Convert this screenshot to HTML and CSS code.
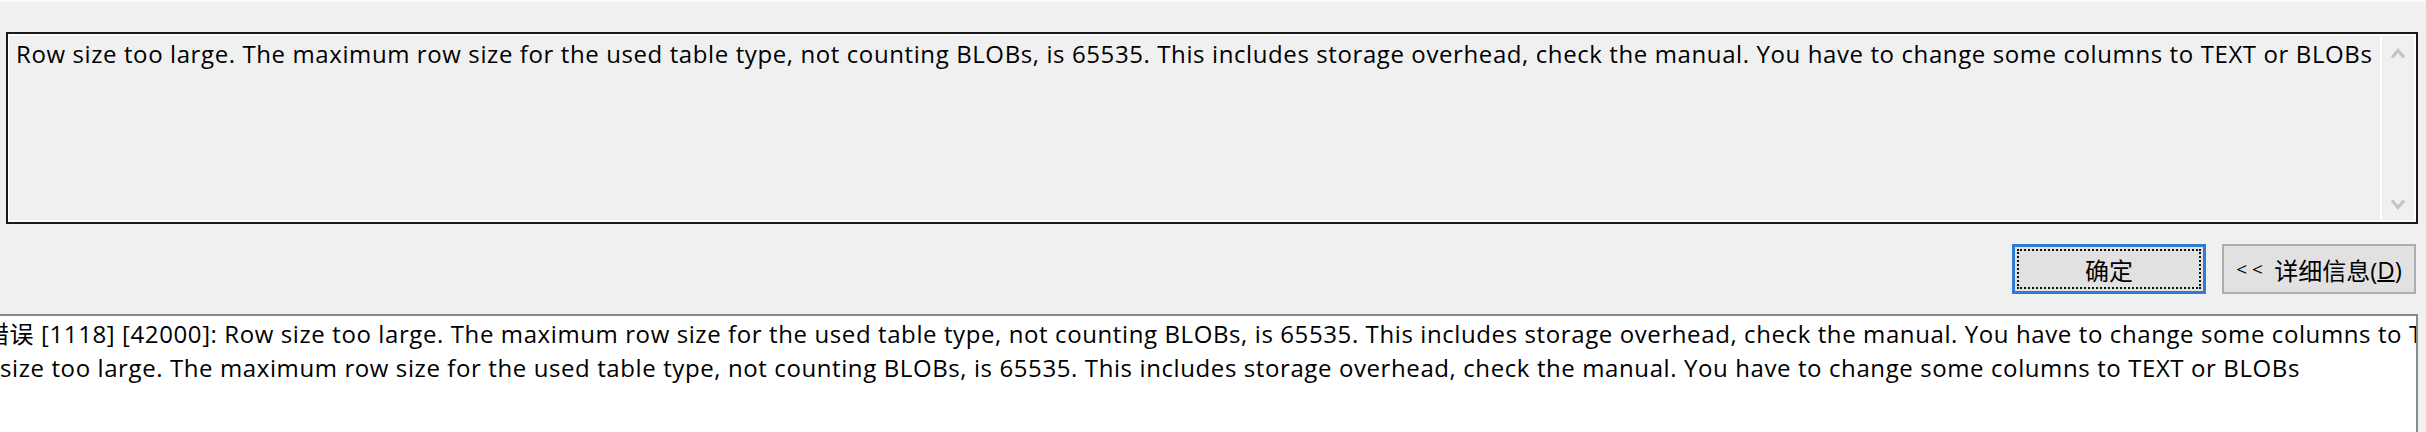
FILE: index.html
```html
<!DOCTYPE html>
<html lang="zh-CN">
<head>
<meta charset="utf-8">
<title>Error</title>
<link rel="stylesheet" href="styles.css">
</head>
<body>
<div class="top-strip"></div>
<div class="msg-box">
  <div class="msg-text">Row size too large. The maximum row size for the used table type, not counting BLOBs, is 65535. This includes storage overhead, check the manual. You have to change some columns to TEXT or BLOBs</div>
  <div class="vscroll">
    <svg class="arrow" width="16" height="12" viewBox="0 0 16 12"><polyline points="2,10.5 8,3.5 14,10.5" fill="none" stroke="#c4c4c4" stroke-width="3.2"/></svg>
    <svg class="arrow" width="16" height="12" viewBox="0 0 16 12"><polyline points="2,1.5 8,8.5 14,1.5" fill="none" stroke="#c4c4c4" stroke-width="3.2"/></svg>
  </div>
</div>
<div class="actions">
  <button class="btn btn-default"><span class="focus-ring">确定</span></button>
  <button class="btn"><span class="chev">&lt;&lt;</span> 详细信息(<u>D</u>)</button>
</div>
<div class="details">
  <div class="line first">错误 [1118] [42000]: Row size too large. The maximum row size for the used table type, not counting BLOBs, is 65535. This includes storage overhead, check the manual. You have to change some columns to TEXT or BLOBs</div>
  <div class="line">size too large. The maximum row size for the used table type, not counting BLOBs, is 65535. This includes storage overhead, check the manual. You have to change some columns to TEXT or BLOBs</div>
</div>
</body>
</html>
```
FILE: styles.css
```css
html, body {
  margin: 0;
  padding: 0;
  width: 2426px;
  height: 432px;
  overflow: hidden;
  background: #f0f0f0;
  font-family: "Open Sans", "Noto Sans CJK SC", sans-serif;
  font-size: 24px;
  color: #000;
}

.top-strip {
  height: 2px;
  background: #f9f9f9;
}

.msg-box {
  box-sizing: border-box;
  margin: 30px 0 0 6px;
  width: 2412px;
  height: 192px;
  border: 2px solid #191919;
  box-shadow: inset 1px 0 0 #fff, inset -2px 0 0 #fff, inset 0 2px 0 #fff, inset 0 -2px 0 #fff;
  background: #f0f0f0;
  display: flex;
  padding: 2px 2px 2px 1px;
}

.msg-text {
  flex: 1;
  padding: 1px 0 0 7px;
  line-height: 34px;
  letter-spacing: 0.6px;
  white-space: nowrap;
  overflow: hidden;
}

.vscroll {
  width: 32px;
  border-left: 2px solid #fff;
  display: flex;
  flex-direction: column;
  justify-content: space-between;
  align-items: center;
  padding: 11px 0 9px;
}

.arrow {
  display: block;
}

.actions {
  display: flex;
  justify-content: flex-end;
  gap: 16px;
  margin-top: 20px;
  padding-right: 10px;
}

.btn {
  box-sizing: border-box;
  width: 194px;
  height: 50px;
  margin: 0;
  padding: 0;
  background: #e1e1e1;
  border: 2px solid #adadad;
  font-family: "Open Sans", "Noto Sans CJK SC", sans-serif;
  font-size: 24px;
  color: #000;
  display: flex;
  align-items: center;
  justify-content: center;
  white-space: pre;
}

.chev {
  font-size: 19px;
  letter-spacing: 5px;
}

.btn u {
  text-decoration-thickness: 2px;
}

.btn-default {
  border: 3px solid #2f7bd5;
  padding: 2px;
}

.focus-ring {
  box-sizing: border-box;
  width: 100%;
  height: 100%;
  border: 2px dotted #111;
  display: flex;
  align-items: center;
  justify-content: center;
}

.details {
  box-sizing: border-box;
  margin-top: 20px;
  width: 2418px;
  height: 140px;
  background: #fff;
  border-top: 2px solid #868a91;
  border-right: 2px solid #868a91;
  padding-top: 1px;
  overflow: hidden;
}

.line {
  line-height: 34px;
  letter-spacing: 0.6px;
  white-space: nowrap;
}

.line.first {
  margin-left: -15px;
}
```
